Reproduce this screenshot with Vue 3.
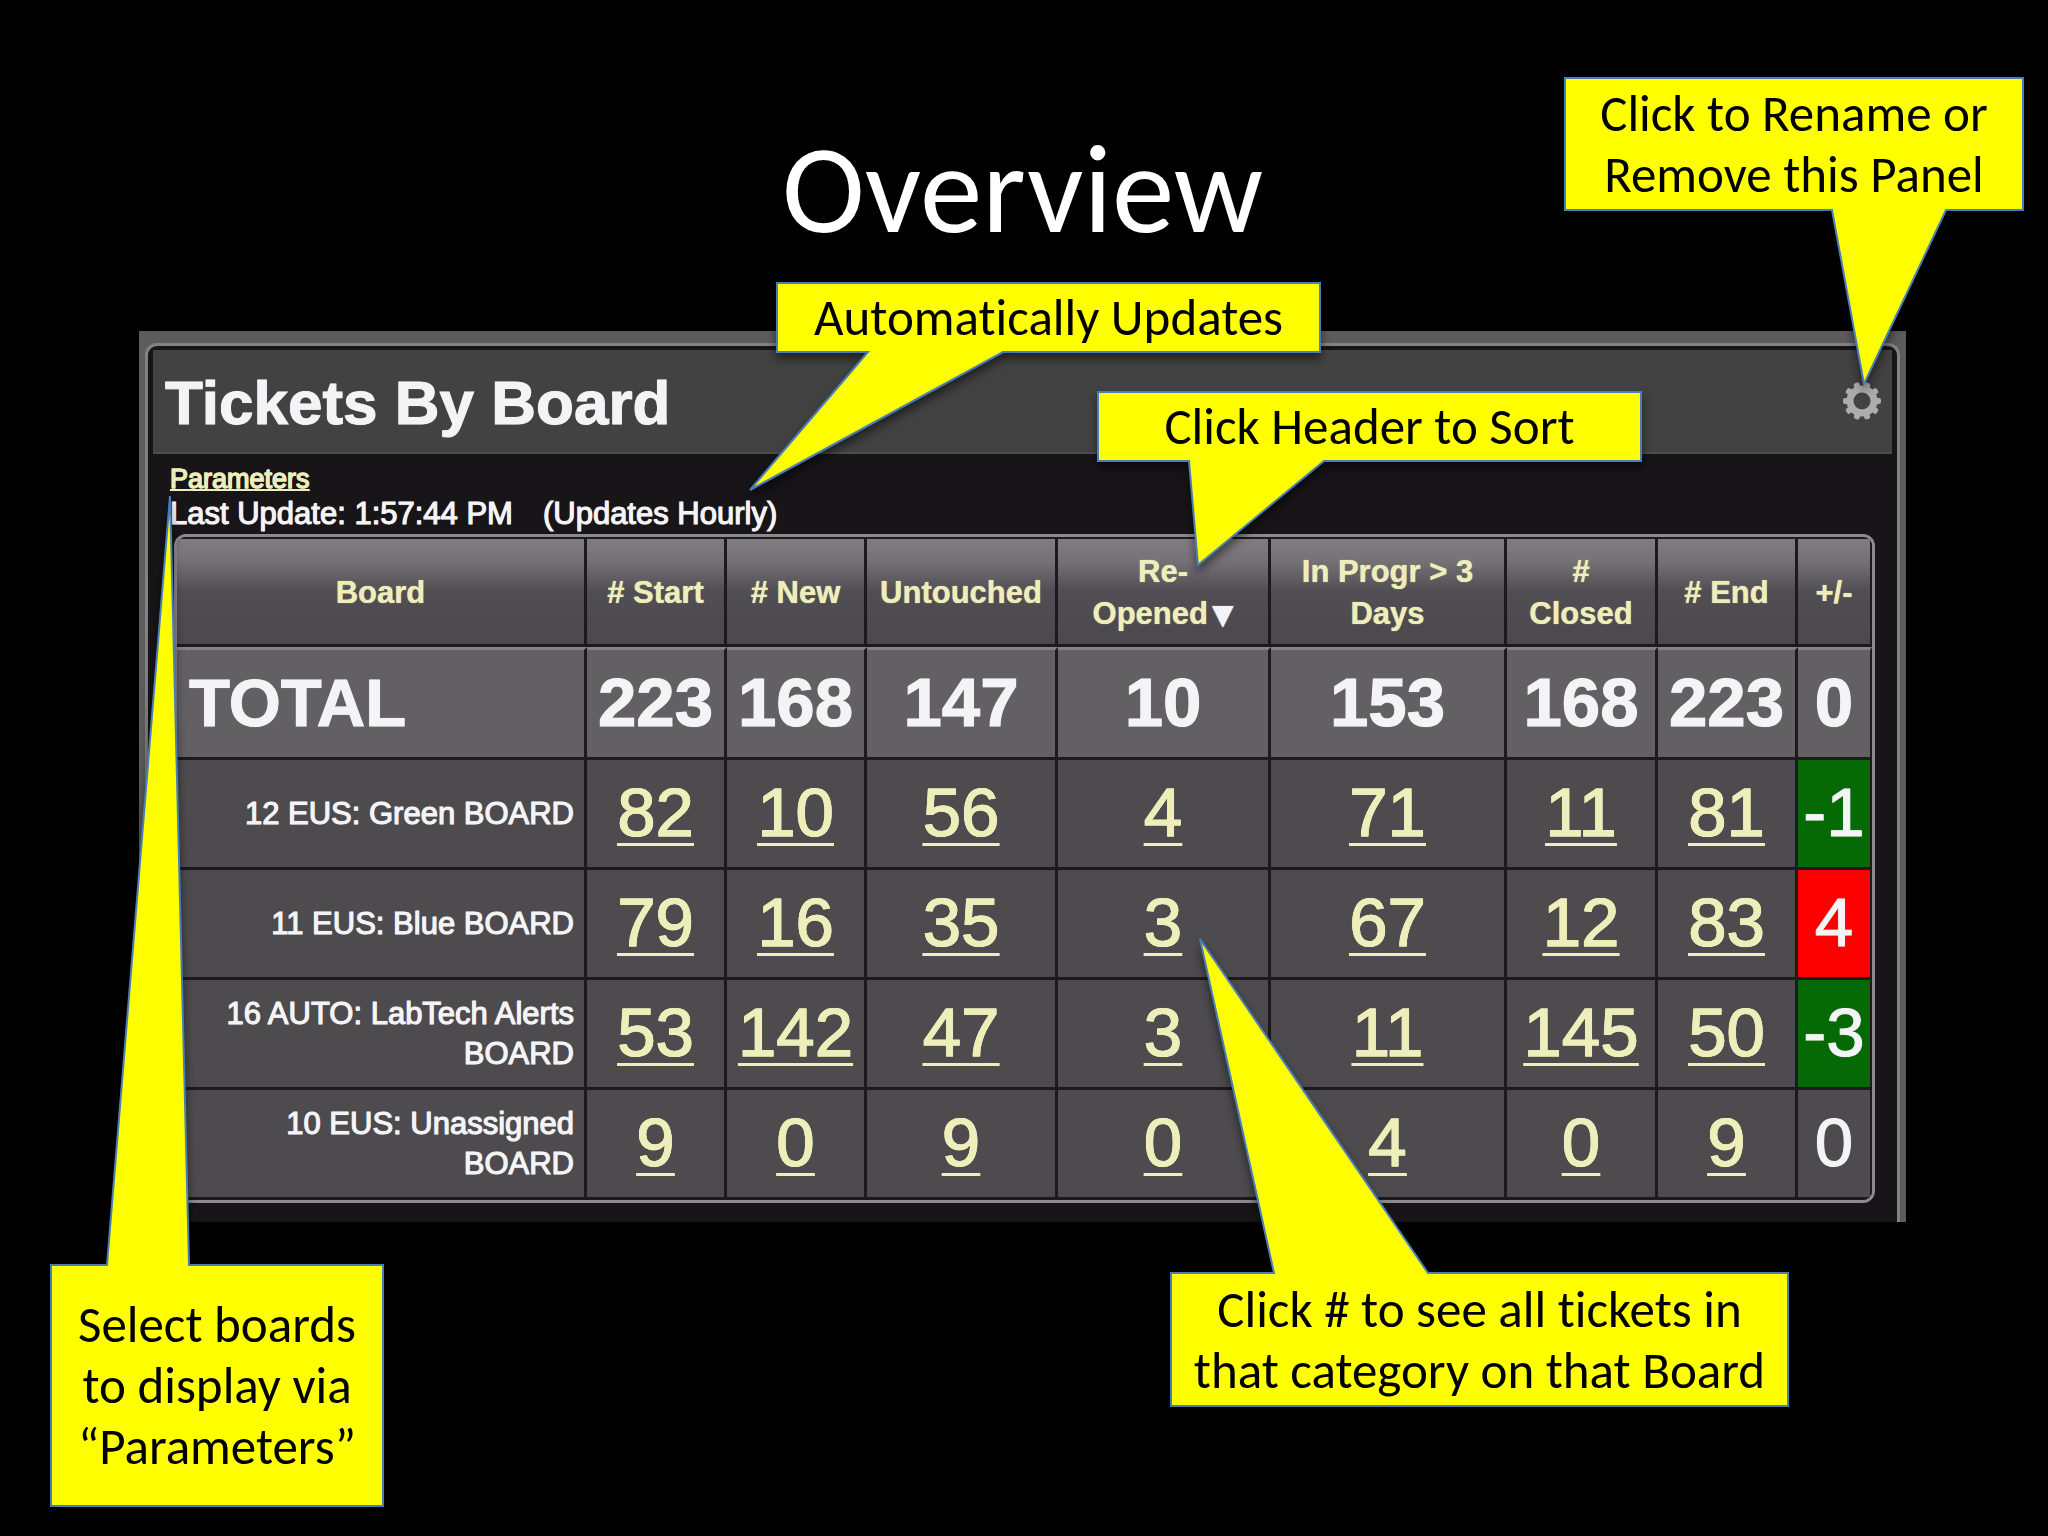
<script setup>
const columns = [
  { key: 'start', label: '# Start' },
  { key: 'new', label: '# New' },
  { key: 'untouched', label: 'Untouched' },
  { key: 'reopened', label: 'Re-\nOpened', sorted: true },
  { key: 'progress', label: 'In Progr > 3\nDays' },
  { key: 'closed', label: '#\nClosed' },
  { key: 'end', label: '# End' },
]

const totals = { start: 223, new: 168, untouched: 147, reopened: 10, progress: 153, closed: 168, end: 223, diff: 0 }

const boards = [
  { name: '12 EUS: Green BOARD', start: 82, new: 10, untouched: 56, reopened: 4, progress: 71, closed: 11, end: 81, diff: -1 },
  { name: '11 EUS: Blue BOARD', start: 79, new: 16, untouched: 35, reopened: 3, progress: 67, closed: 12, end: 83, diff: 4 },
  { name: '16 AUTO: LabTech Alerts BOARD', start: 53, new: 142, untouched: 47, reopened: 3, progress: 11, closed: 145, end: 50, diff: -3 },
  { name: '10 EUS: Unassigned BOARD', start: 9, new: 0, untouched: 9, reopened: 0, progress: 4, closed: 0, end: 9, diff: 0 },
]

// Each callout has a box on the slide; base and tip place its pointer,
// measured from the box's top left corner.
const callouts = [
  { lines: ['Click to Rename or', 'Remove this Panel'], x: 1565, y: 78, w: 458, h: 132, base: [267, 381], tip: [299, 306] },
  { lines: ['Automatically Updates'], x: 777, y: 283, w: 543, h: 69, base: [91, 226], tip: [-27, 207] },
  { lines: ['Click Header to Sort'], x: 1098, y: 392, w: 543, h: 69, base: [91, 226], tip: [100, 173] },
  { lines: ['Select boards', 'to display via', '“Parameters”'], x: 51, y: 1265, w: 332, h: 241, base: [56, 138], tip: [119, -769] },
  { lines: ['Click # to see all tickets in', 'that category on that Board'], x: 1171, y: 1273, w: 617, h: 133, base: [103, 257], tip: [29, -334] },
]

function outline({ w, h, base, tip }) {
  const [a, b] = base
  const pointer = tip.join(',')
  return tip[1] < 0
    ? `0,0 ${a},0 ${pointer} ${b},0 ${w},0 ${w},${h} 0,${h}`
    : `0,0 ${w},0 ${w},${h} ${b},${h} ${pointer} ${a},${h} 0,${h}`
}

function diffClass(value) {
  return { down: value < 0, up: value > 0 }
}
</script>

<template>
  <main class="slide">
    <h1 class="title">Overview</h1>

    <section class="panel">
      <div class="panel-inner">
        <header class="panel-head">
          <h2>Tickets By Board</h2>
          <button class="gear" type="button" aria-label="Panel settings">
            <svg viewBox="0 0 40 40" width="40" height="40">
              <circle cx="20" cy="20" r="12" fill="none" stroke="#acacac" stroke-width="7" />
              <g fill="#acacac">
                <rect
                  v-for="n in 10"
                  :key="n"
                  x="17"
                  y="1"
                  width="6"
                  height="7"
                  rx="2"
                  :transform="`rotate(${n * 36 - 18} 20 20)`"
                />
              </g>
            </svg>
          </button>
        </header>

        <div class="info">
          <a class="parameters" href="#parameters">Parameters</a>
          <p><span>Last Update: 1:57:44 PM</span><span>(Updates Hourly)</span></p>
        </div>

        <div class="frame">
          <table>
            <colgroup>
              <col />
              <col v-for="c in columns" :key="c.key" :class="`col-${c.key}`" />
              <col class="col-diff" />
            </colgroup>
            <thead>
              <tr>
                <th scope="col"><button type="button">Board</button></th>
                <th v-for="c in columns" :key="c.key" scope="col">
                  <button type="button">{{ c.label }}<span v-if="c.sorted" class="arrow">▼</span></button>
                </th>
                <th scope="col"><button type="button">+/-</button></th>
              </tr>
            </thead>
            <tbody>
              <tr class="total">
                <th scope="row">TOTAL</th>
                <td v-for="c in columns" :key="c.key">{{ totals[c.key] }}</td>
                <td>{{ totals.diff }}</td>
              </tr>
              <tr v-for="b in boards" :key="b.name">
                <th scope="row">{{ b.name }}</th>
                <td v-for="c in columns" :key="c.key"><a href="#tickets">{{ b[c.key] }}</a></td>
                <td :class="diffClass(b.diff)">{{ b.diff }}</td>
              </tr>
            </tbody>
          </table>
        </div>
      </div>
    </section>

    <aside
      v-for="c in callouts"
      :key="c.lines[0]"
      class="callout"
      :style="{ left: c.x + 'px', top: c.y + 'px', width: c.w + 'px', height: c.h + 'px' }"
    >
      <svg class="shape" aria-hidden="true" :width="c.w" :height="c.h">
        <polygon :points="outline(c)" />
      </svg>
      <p>
        <span v-for="line in c.lines" :key="line">{{ line }}</span>
      </p>
    </aside>
  </main>
</template>

<style>
body {
  background: #000;
}
</style>

<style scoped>
.slide {
  position: relative;
  box-sizing: border-box;
  min-height: 100vh;
  padding: 118px 142px 0 139px;
  overflow: hidden;
  background: #000;
  color: #f4f4f6;
  font-family: "Liberation Sans", Arial, sans-serif;
}

.title {
  margin: 0 0 69px;
  color: #fff;
  font: 400 125px/144px Carlito, Lato, sans-serif;
  text-align: center;
}

.panel {
  padding: 12px 6px 0;
  background: #5c5c5c;
  text-shadow: 0 0 1px currentColor;
}

.panel-inner {
  padding: 4px 5px 19px;
  border: 3px solid #828282;
  border-bottom: 0;
  border-radius: 12px 12px 0 0;
  background: #171517;
}

.panel-head {
  display: flex;
  align-items: center;
  justify-content: space-between;
  height: 102px;
  padding: 0 10px 0 12px;
  border-bottom: 2px solid #4e4c4e;
  background: #434242;
}

h2 {
  margin: 0;
  padding-top: 4px;
  font-size: 62px;
  line-height: 76px;
  -webkit-text-stroke: 1px currentColor;
}

.gear {
  padding: 0;
  border: 0;
  background: none;
}

.gear svg {
  display: block;
}

.info {
  padding: 8px 0 3px 17px;
  font-size: 31px;
  line-height: 35px;
}

.parameters {
  display: block;
  width: fit-content;
  color: #eeeebb;
  font-size: 27px;
  line-height: 34px;
  text-decoration-thickness: 2px;
}

.info p {
  display: flex;
  gap: 30px;
  margin: 0;
}

.info,
tbody th {
  -webkit-text-stroke: 1px currentColor;
}

.frame {
  margin: 0 17px 0 21px;
  border: 3px solid #8c8a8c;
  border-radius: 12px;
  overflow: hidden;
  background: #161416;
}

table {
  width: 100%;
  table-layout: fixed;
  border-collapse: separate;
  border-spacing: 0;
}

.col-start,
.col-new,
.col-end {
  width: 140px;
}

.col-untouched {
  width: 191px;
}

.col-reopened {
  width: 213px;
}

.col-progress {
  width: 236px;
}

.col-closed {
  width: 151px;
}

.col-diff {
  width: 74px;
}

th,
td {
  box-sizing: border-box;
  height: 110px;
  padding: 0;
  border-right: 3px solid #1c1a1c;
  border-bottom: 3px solid #1c1a1c;
  background: #4d4b4e;
  text-align: center;
  vertical-align: middle;
}

thead th {
  padding-top: 2px;
  border-top: 2px solid #1c1a1c;
  background: linear-gradient(#7f7d80, #757376 20%, #504e52 50%, #4b494c);
}

thead button {
  width: 100%;
  padding: 0;
  border: 0;
  background: none;
  color: #eeeebb;
  font: 700 31px/42px "Liberation Sans", Arial, sans-serif;
  text-shadow: inherit;
  white-space: pre-line;
}

.arrow {
  margin-left: 4px;
  color: #f4f4f6;
  font: 28px/28px "DejaVu Sans", sans-serif;
}

td {
  padding-bottom: 2px;
  font-size: 69px;
  line-height: 76px;
  -webkit-text-stroke: 1px currentColor;
}

td a {
  color: #eeeebb;
  text-decoration-thickness: 3px;
  text-underline-offset: 7px;
}

tbody th {
  padding: 0 10px 0 24px;
  font-size: 31px;
  font-weight: 400;
  line-height: 40px;
  text-align: right;
}

.total th,
.total td {
  height: 113px;
  border-top: 3px solid #858386;
  background: #626063;
  font-size: 69px;
  font-weight: 700;
}

.total th {
  padding: 0 12px 2px;
  font-size: 67px;
  text-align: left;
}

tr > :last-child {
  border-right-width: 2px;
}

.down {
  background: #056a05;
}

.up {
  background: #fd0000;
}

.callout {
  position: absolute;
  display: flex;
  align-items: center;
  justify-content: center;
  color: #000;
  font: 400 51px/61px Carlito, Lato, sans-serif;
  font-variant-ligatures: none;
}

.shape {
  position: absolute;
  inset: 0;
  overflow: visible;
  filter: drop-shadow(0 6px 5px rgba(0, 0, 0, 0.5));
}

.shape polygon {
  fill: #ff0;
  stroke: #4a7ebb;
  stroke-width: 2px;
}

.callout p {
  position: relative;
  margin: 0;
  text-align: center;
  white-space: nowrap;
}

.callout span {
  display: block;
}
</style>
